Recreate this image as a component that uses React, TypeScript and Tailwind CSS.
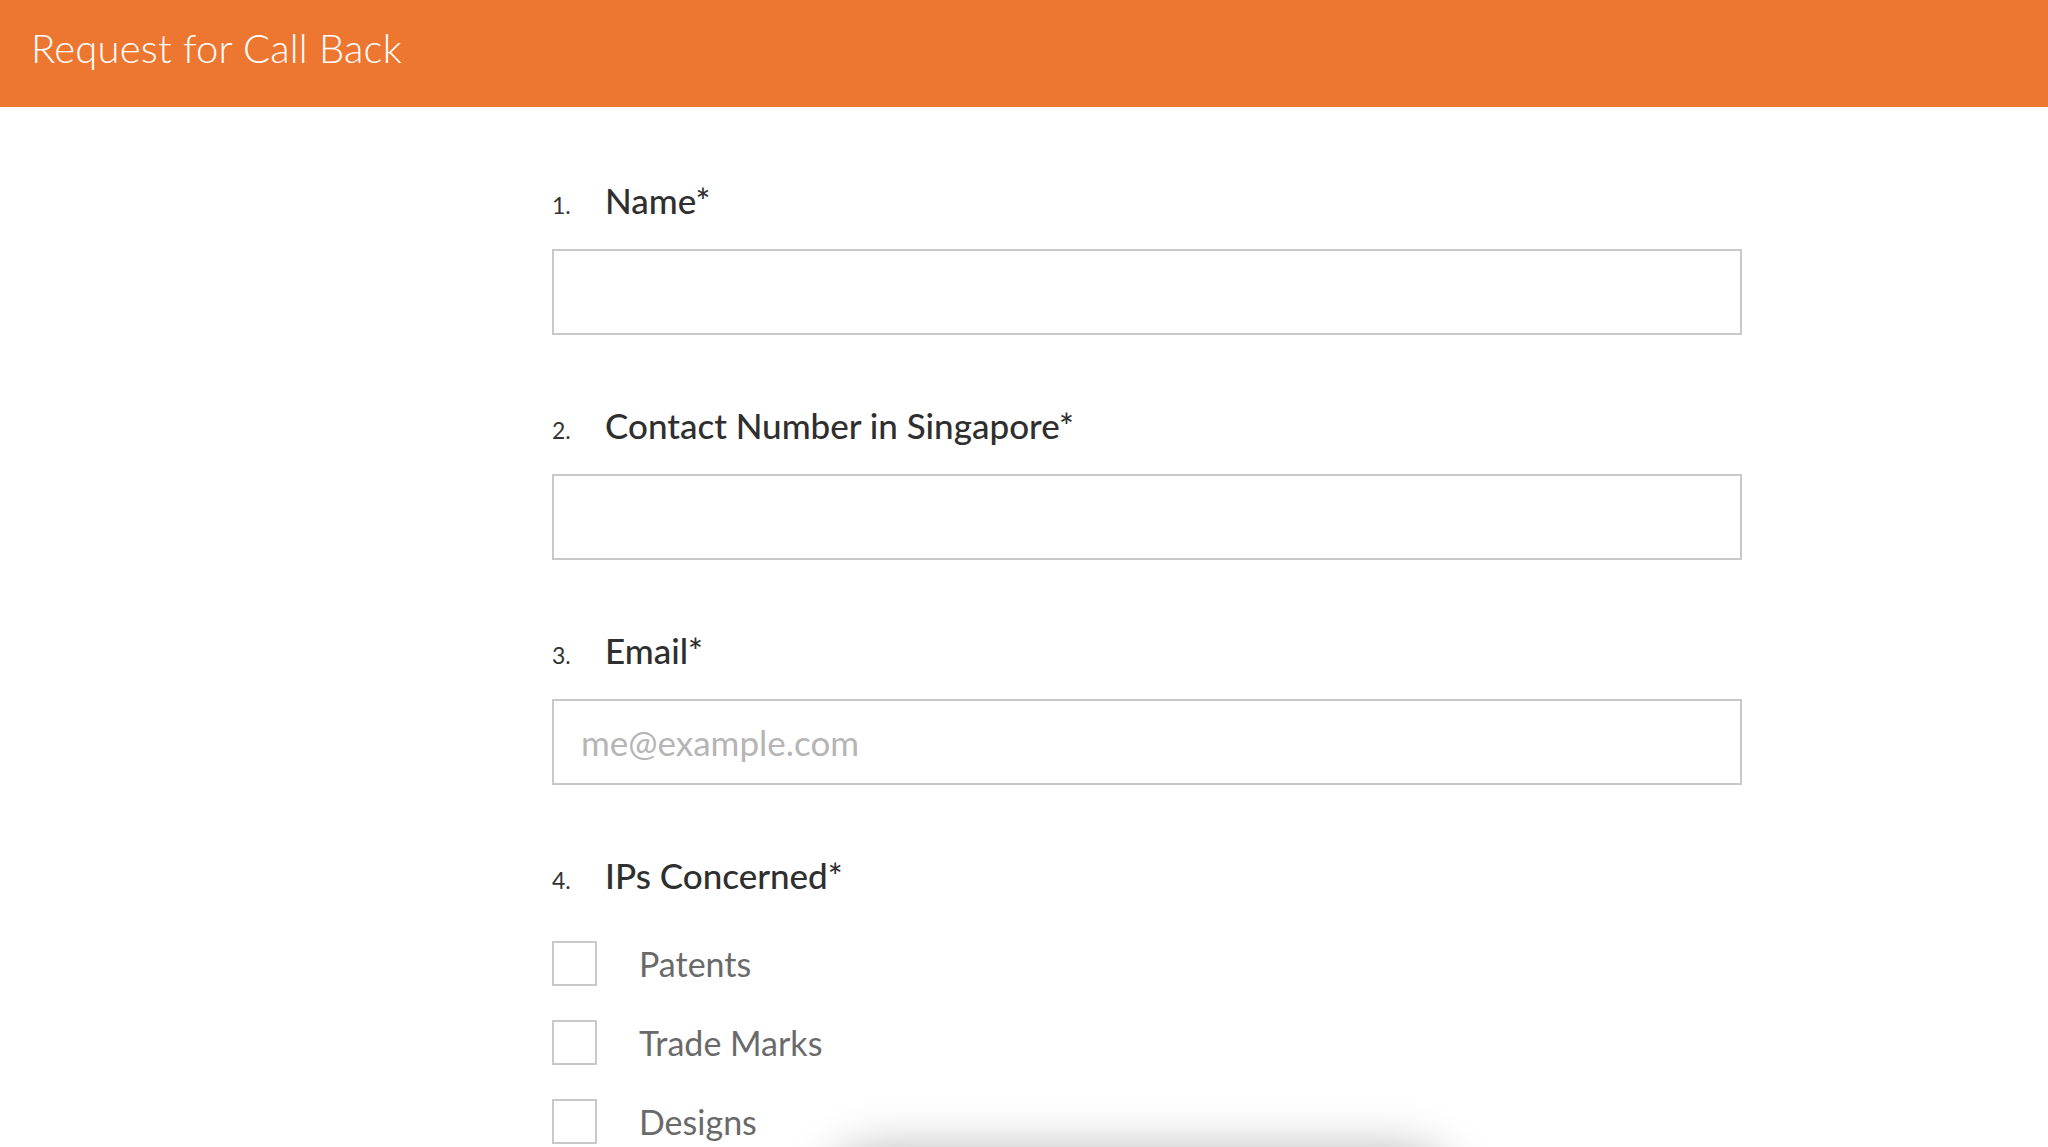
import React from "react";

const fields = [
  { n: "1.", label: "Name*", placeholder: "" },
  { n: "2.", label: "Contact Number in Singapore*", placeholder: "" },
  { n: "3.", label: "Email*", placeholder: "me@example.com" },
];

const ips = ["Patents", "Trade Marks", "Designs"];

function Label({ n, text }: { n: string; text: string }) {
  return (
    <div className="flex items-baseline leading-[1.2]">
      <span className="w-[53px] text-[23px] text-[#333333]">{n}</span>
      <span className="text-[35px] font-medium text-[#2f2f2f]">{text}</span>
    </div>
  );
}

export default function App() {
  return (
    <div
      className="relative h-[1147px] w-[2048px] overflow-hidden bg-white"
      style={{ fontFamily: "Lato, 'Open Sans', sans-serif" }}
    >
      {/* Header bar */}
      <header className="flex h-[107px] items-center bg-[#ed7731] px-[31px] pb-[12px]">
        <h1 className="text-[40px] font-light tracking-[0.2px] text-white">Request for Call Back</h1>
      </header>

      {/* Form */}
      <form className="ml-[552px] w-[1190px] pt-[72px]">
        {fields.map((f, i) => (
          <div key={f.n} className={i === 0 ? "" : "mt-[69px]"}>
            <Label n={f.n} text={f.label} />
            <input
              type="text"
              placeholder={f.placeholder}
              className="mt-[28px] block h-[86px] w-full border-2 border-[#c9c9c9] bg-white px-[27px] text-[35px] text-[#333] outline-none placeholder:text-[#b5b5b5]"
            />
          </div>
        ))}

        <div className="mt-[69px]">
          <Label n="4." text="IPs Concerned*" />
          <div className="mt-[45px] flex flex-col gap-[34px]">
            {ips.map((ip) => (
              <label key={ip} className="flex h-[45px] items-center gap-[42px]">
                <span className="block h-[45px] w-[45px] shrink-0 border-2 border-[#c9c9c9] bg-white" />
                <span className="text-[34px] leading-none text-[#6a6a6a]">{ip}</span>
              </label>
            ))}
          </div>
        </div>
      </form>

      {/* floating element shadow peeking from below */}
      <div className="absolute left-[840px] top-[1165px] h-[80px] w-[600px] rounded-full bg-white shadow-[0_0_50px_14px_rgba(0,0,0,0.3)]" />
    </div>
  );
}
